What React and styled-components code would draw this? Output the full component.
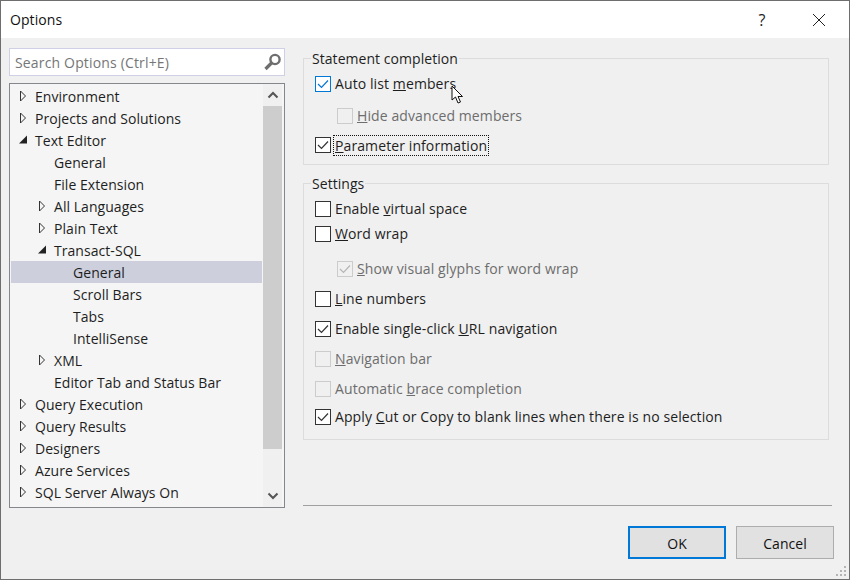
import React from "react";
import styled, { createGlobalStyle } from "styled-components";

const Global = createGlobalStyle`
  html, body { margin: 0; padding: 0; background: #f0f0f0; }
  * { box-sizing: border-box; }
  body { font-family: "Open Sans", "Noto Sans", "Liberation Sans", sans-serif; font-size: 14px; color: #1e1e1e; }
`;

const Dialog = styled.div`
  position: relative;
  width: 850px; height: 580px;
  border: 1px solid #6e6e6e;
  background: #f0f0f0;
  display: flex; flex-direction: column;
`;
const TitleBar = styled.header`
  height: 37px; background: #fff; flex: none;
  display: flex; align-items: center;
  padding: 0 0 0 9px;
`;
const Title = styled.div`
  flex: 1; font-size: 14px; color: #111; letter-spacing: 0.08px;
`;
const HelpGlyph = styled.div`
  width: 20px; text-align: center; font-size: 16px; color: #222; margin-right: 40px;
`;
const CloseBtn = styled.div`
  width: 14px; height: 14px; margin-right: 23px; display: flex;
`;
const Body = styled.div`
  flex: 1; display: flex; padding: 10px 15px 0 8px; gap: 18px; min-height: 0;
`;
const Left = styled.aside`
  width: 276px; flex: none; display: flex; flex-direction: column; gap: 7px;
`;
const Search = styled.div`
  height: 28px; border: 1px solid #cfcfe6; background: #fff;
  display: flex; align-items: center; justify-content: space-between;
  padding: 0 2px 0 5px; color: #767676; letter-spacing: 0.16px;
`;
const Tree = styled.div`
  height: 425px; border: 1px solid #85878d; background: #f5f5f5;
  display: flex; padding: 1px 1px 0 1px;
`;
const TreeList = styled.ul`
  flex: 1; list-style: none; margin: 0; padding: 0 1px 0 0;
`;
const TreeRow = styled.li`
  height: 22px; display: flex; align-items: center;
  padding-left: ${p => 8 + p.$level * 19}px;
  background: ${p => (p.$selected ? "#cdcfdd" : "transparent")};
  white-space: nowrap; letter-spacing: 0.05px;
`;
const Arrow = styled.span`
  width: 16px; height: 12px; flex: none; display: flex; align-items: center;
`;
const Scrollbar = styled.div`
  width: 20px; flex: none; margin-top: -1px; background: #f0f0f0;
  display: flex; flex-direction: column; border-right: 1px solid #f5f5f5;
`;
const ScrollBtn = styled.div`
  height: 22px; flex: none; display: flex; align-items: center; justify-content: center;
`;
const Thumb = styled.div`
  height: 343px; flex: none; background: #cdcdcd;
`;
const Right = styled.main`
  flex: 1; display: flex; flex-direction: column; min-width: 0;
`;
const Group = styled.fieldset`
  margin: 0 0 ${p => p.$after}px; padding: 0 0 ${p => p.$pad}px 11px; width: 526px;
  border: 1px solid #dcdcdc; min-inline-size: 0;
`;
const Legend = styled.legend`
  padding: 1px 1px 0; margin-left: -4px; height: 20px; line-height: 20px; letter-spacing: 0.05px; color: #1e1e1e;
`;
const Option = styled.div`
  position: relative;
  height: 20px; display: flex; align-items: center; gap: 3px;
  margin-top: ${p => p.$top}px;
  margin-left: ${p => (p.$indent ? 22 : 0)}px;
  color: ${p => (p.$disabled ? "#6d6d6d" : "#1e1e1e")};
  letter-spacing: 0.1px; white-space: nowrap;
`;
const Box = styled.span`
  width: 16px; height: 16px; flex: none; display: flex; align-items: center; justify-content: center;
  border: 1px solid ${p => (p.$hot ? "#0078d7" : p.$disabled ? "#cccccc" : "#333")};
  background: ${p => (p.$disabled ? "#f0f0f0" : "#fff")};
`;
const Label = styled.span`
  padding: 0 1px;
  outline: ${p => (p.$focus ? "1px dotted #111" : "none")};
  line-height: ${p => (p.$focus ? "19px" : "20px")};
`;
const Spacer = styled.div`flex: 1;`;
const Divider = styled.hr`
  margin: 0; border: 0; height: 1px; background: #a0a0a0; width: 529px; flex: none;
`;
const Footer = styled.footer`
  height: 73px; flex: none; display: flex; justify-content: flex-end; gap: 10px; padding-top: 20px; width: 531px;
`;
const Button = styled.button`
  width: 98px; height: 33px; font: inherit; color: #111; background: #e1e1e1; padding: 2px 0 0; letter-spacing: 0.05px;
  border: ${p => (p.$primary ? "2px solid #0078d7" : "1px solid #adadad")};
`;
const Cursor = styled.svg`
  position: absolute; left: 450px; top: 84px; pointer-events: none;
`;
const Grip = styled.svg`
  position: absolute; right: 1px; bottom: 1px;
`;

const Hollow = () => (
  <svg width="8" height="12" viewBox="0 0 8 12"><path d="M1.5 1 L6.5 6 L1.5 11 Z" fill="none" stroke="#333" strokeWidth="1" /></svg>
);
const Filled = () => (
  <svg width="10" height="10" viewBox="0 0 10 10"><path d="M0 8.5 L8 8.5 L8 0.5 Z" fill="#222" /></svg>
);
const Check = ({ color }) => (
  <svg width="12" height="10" viewBox="0 0 12 10"><path d="M1 5 L4.5 8.5 L11 1.5" fill="none" stroke={color} strokeWidth="1.2" /></svg>
);
const Chevron = ({ up }) => (
  <svg width="12" height="8" viewBox="0 0 12 8">
    <path d={up ? "M1.5 6.5 L6 2 L10.5 6.5" : "M1.5 1.5 L6 6 L10.5 1.5"} fill="none" stroke="#555" strokeWidth="2" />
  </svg>
);

const tree = [
  ["Environment", 0, "c"], ["Projects and Solutions", 0, "c"], ["Text Editor", 0, "o"],
  ["General", 1], ["File Extension", 1], ["All Languages", 1, "c"], ["Plain Text", 1, "c"],
  ["Transact-SQL", 1, "o"], ["General", 2, null, true], ["Scroll Bars", 2], ["Tabs", 2], ["IntelliSense", 2],
  ["XML", 1, "c"], ["Editor Tab and Status Bar", 1], ["Query Execution", 0, "c"], ["Query Results", 0, "c"],
  ["Designers", 0, "c"], ["Azure Services", 0, "c"], ["SQL Server Always On", 0, "c"],
];

const Opt = ({ top, checked, hot, disabled, indent, focus, children }) => (
  <Option $top={top} $disabled={disabled} $indent={indent}>
    <Box $hot={hot} $disabled={disabled}>
      {checked && <Check color={hot ? "#0078d7" : disabled ? "#b5b5b5" : "#333"} />}
    </Box>
    <Label $focus={focus}>{children}</Label>
  </Option>
);

export default function App() {
  return (
    <Dialog>
      <Global />
      <TitleBar>
        <Title>Options</Title>
        <HelpGlyph>?</HelpGlyph>
        <CloseBtn>
          <svg width="14" height="14" viewBox="0 0 14 14"><path d="M1 1 L13 13 M13 1 L1 13" stroke="#222" strokeWidth="1" /></svg>
        </CloseBtn>
      </TitleBar>
      <Body>
        <Left>
          <Search>
            <span>Search Options (Ctrl+E)</span>
            <svg width="18" height="18" viewBox="0 0 18 18">
              <circle cx="11" cy="6.5" r="4.6" fill="none" stroke="#6e6e6e" strokeWidth="2.4" />
              <path d="M7.5 10 L1.5 16" stroke="#6e6e6e" strokeWidth="3.2" />
            </svg>
          </Search>
          <Tree>
            <TreeList>
              {tree.map(([text, level, state, selected], i) => (
                <TreeRow key={i} $level={level} $selected={selected}>
                  <Arrow>{state === "c" ? <Hollow /> : state === "o" ? <Filled /> : null}</Arrow>
                  <span>{text}</span>
                </TreeRow>
              ))}
            </TreeList>
            <Scrollbar>
              <ScrollBtn><Chevron up /></ScrollBtn>
              <Thumb />
              <Spacer />
              <ScrollBtn><Chevron /></ScrollBtn>
            </Scrollbar>
          </Tree>
        </Left>
        <Right>
          <Group $after={8} $pad={9}>
            <Legend>Statement completion</Legend>
            <Opt top={6} checked hot>Auto list <u>m</u>embers</Opt>
            <Opt top={12} disabled indent><u>H</u>ide advanced members</Opt>
            <Opt top={9} checked focus><u>P</u>arameter information</Opt>
          </Group>
          <Group $after={0} $pad={12}>
            <Legend>Settings</Legend>
            <Opt top={6}>Enable <u>v</u>irtual space</Opt>
            <Opt top={5}><u>W</u>ord wrap</Opt>
            <Opt top={15} checked disabled indent><u>S</u>how visual glyphs for word wrap</Opt>
            <Opt top={10}><u>L</u>ine numbers</Opt>
            <Opt top={10} checked>Enable single-click <u>U</u>RL navigation</Opt>
            <Opt top={10} disabled><u>N</u>avigation bar</Opt>
            <Opt top={10} disabled>Automatic <u>b</u>race completion</Opt>
            <Opt top={8} checked>Apply <u>C</u>ut or Copy to blank lines when there is no selection</Opt>
          </Group>
          <Spacer />
          <Divider />
          <Footer>
            <Button $primary>OK</Button>
            <Button>Cancel</Button>
          </Footer>
        </Right>
      </Body>
      <Cursor width="14" height="20" viewBox="0 0 14 20">
        <path d="M1 1 L1 15 L4.5 12 L7 18 L9.5 17 L7 11.5 L11.5 11.5 Z" fill="#fff" stroke="#111" strokeWidth="1" />
      </Cursor>
      <Grip width="14" height="14" viewBox="0 0 14 14" fill="#b4b4b4">
        <rect x="10" y="2" width="2" height="2" />
        <rect x="6" y="6" width="2" height="2" /><rect x="10" y="6" width="2" height="2" />
        <rect x="2" y="10" width="2" height="2" /><rect x="6" y="10" width="2" height="2" /><rect x="10" y="10" width="2" height="2" />
      </Grip>
    </Dialog>
  );
}
